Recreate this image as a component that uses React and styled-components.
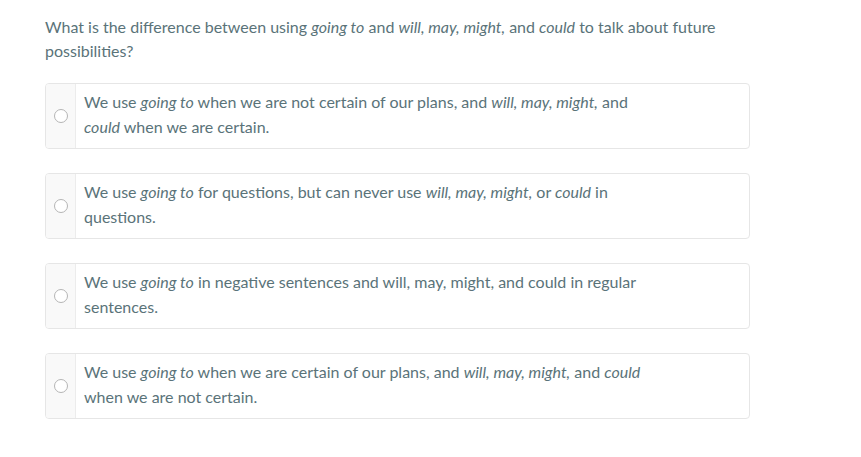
import React from "react";
import styled, { createGlobalStyle } from "styled-components";

const Global = createGlobalStyle`
  html, body { margin: 0; padding: 0; background: #fff; }
  body { font-family: Lato, "Open Sans", sans-serif; }
`;

const Page = styled.div`
  padding: 15px 111px 20px 45px;
  color: #5a7379;
  font-size: 16px;
`;

const Question = styled.p`
  margin: 0 0 20px;
  line-height: 24px;
`;

const Options = styled.div`
  display: flex;
  flex-direction: column;
  gap: 24px;
`;

const Card = styled.label`
  display: flex;
  border: 1px solid #e6e6e6;
  border-radius: 4px;
  min-height: 64px;
  overflow: hidden;
`;

const RadioCell = styled.div`
  width: 29px;
  flex: none;
  background: #f9f9f9;
  border-right: 1px solid #ececec;
  display: flex;
  align-items: center;
  justify-content: center;
`;

const Radio = styled.span`
  width: 14px;
  height: 14px;
  border-radius: 50%;
  border: 1px solid #b5b5b5;
  background: #fff;
  box-sizing: border-box;
`;

const Text = styled.div`
  padding: 5px 90px 9px 8px;
  line-height: 25px;
`;

const options = [
  <>We use <i>going to</i> when we are not certain of our plans, and <i>will, may, might,</i> and <i>could</i> when we are certain.</>,
  <>We use <i>going to</i> for questions, but can never use <i>will, may, might,</i> or <i>could</i> in questions.</>,
  <>We use <i>going to</i> in negative sentences and will, may, might, and could in regular sentences.</>,
  <>We use <i>going to</i> when we are certain of our plans, and <i>will, may, might,</i> and <i>could</i> when we are not certain.</>,
];

export default function App() {
  return (
    <>
      <Global />
      <Page>
        <Question>
          What is the difference between using <i>going to</i> and <i>will, may, might,</i> and <i>could</i> to talk about future possibilities?
        </Question>
        <Options>
          {options.map((o, i) => (
            <Card key={i}>
              <RadioCell><Radio /></RadioCell>
              <Text>{o}</Text>
            </Card>
          ))}
        </Options>
      </Page>
    </>
  );
}
